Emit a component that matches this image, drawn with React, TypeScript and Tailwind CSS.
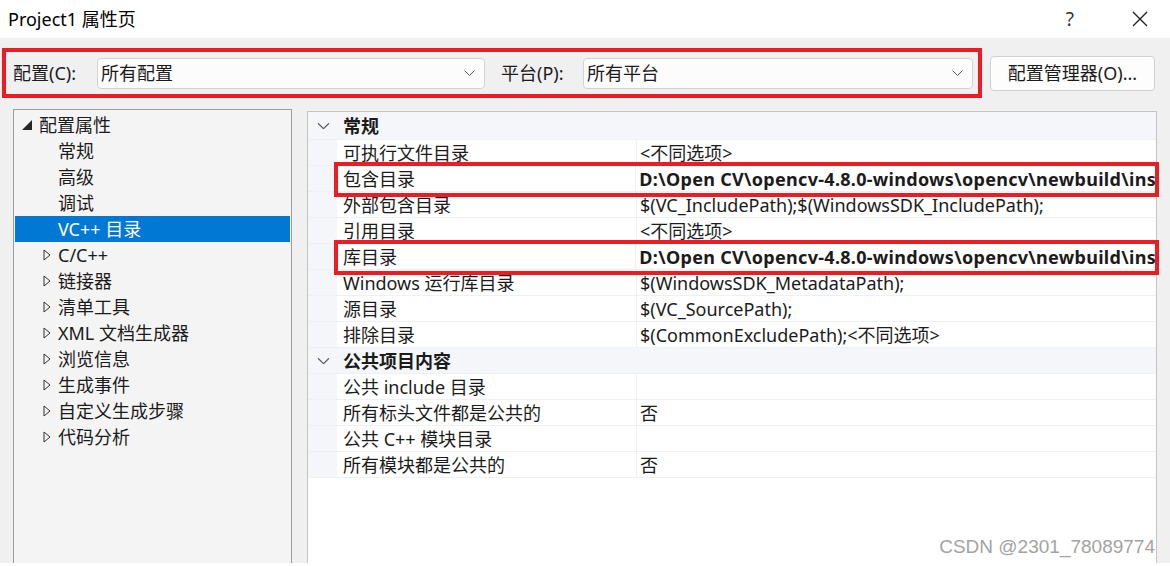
import React from 'react';

type TreeItem = {
  label: string;
  level: 0 | 1;
  arrow?: 'open' | 'closed';
  selected?: boolean;
};

const TREE: TreeItem[] = [
  { label: '配置属性', level: 0, arrow: 'open' },
  { label: '常规', level: 1 },
  { label: '高级', level: 1 },
  { label: '调试', level: 1 },
  { label: 'VC++ 目录', level: 1, selected: true },
  { label: 'C/C++', level: 1, arrow: 'closed' },
  { label: '链接器', level: 1, arrow: 'closed' },
  { label: '清单工具', level: 1, arrow: 'closed' },
  { label: 'XML 文档生成器', level: 1, arrow: 'closed' },
  { label: '浏览信息', level: 1, arrow: 'closed' },
  { label: '生成事件', level: 1, arrow: 'closed' },
  { label: '自定义生成步骤', level: 1, arrow: 'closed' },
  { label: '代码分析', level: 1, arrow: 'closed' },
];

type Prop = { name: string; value: string; bold?: boolean };

// the value column is cut at the panel edge, so only the visible part is kept
const SECTIONS: { title: string; first?: boolean; rows: Prop[] }[] = [
  {
    title: '常规',
    first: true,
    rows: [
      { name: '可执行文件目录', value: '<不同选项>' },
      { name: '包含目录', value: 'D:\\Open CV\\opencv-4.8.0-windows\\opencv\\newbuild\\ins', bold: true },
      { name: '外部包含目录', value: '$(VC_IncludePath);$(WindowsSDK_IncludePath);' },
      { name: '引用目录', value: '<不同选项>' },
      { name: '库目录', value: 'D:\\Open CV\\opencv-4.8.0-windows\\opencv\\newbuild\\ins', bold: true },
      { name: 'Windows 运行库目录', value: '$(WindowsSDK_MetadataPath);' },
      { name: '源目录', value: '$(VC_SourcePath);' },
      { name: '排除目录', value: '$(CommonExcludePath);<不同选项>' },
    ],
  },
  {
    title: '公共项目内容',
    rows: [
      { name: '公共 include 目录', value: '' },
      { name: '所有标头文件都是公共的', value: '否' },
      { name: '公共 C++ 模块目录', value: '' },
      { name: '所有模块都是公共的', value: '否' },
    ],
  },
];

function Chevron({ className = '' }: { className?: string }) {
  return (
    <svg width="11" height="6" viewBox="0 0 11 6" className={className}>
      <polyline points="0.5,0.5 5.5,5.5 10.5,0.5" fill="none" stroke="#5a5a5a" strokeWidth="1" />
    </svg>
  );
}

function Dropdown({ value, width }: { value: string; width: string }) {
  return (
    <div className={`${width} h-[31px] flex items-center justify-between pl-[3px] pr-[9px] bg-[#fcfcfc] border border-[#d3d3d3] rounded-[4px]`}>
      <span>{value}</span>
      <Chevron />
    </div>
  );
}

function TreeRow({ item }: { item: TreeItem }) {
  return (
    <div className={`h-[26px] flex items-center ${item.selected ? 'bg-[#0078d4] text-white' : ''}`}>
      {item.level === 0 ? (
        <div className="w-[24px] flex items-center pl-[7px]">
          <svg width="10" height="10" viewBox="0 0 10 10">
            <path d="M10 0 L10 10 L0 10 Z" fill="#262626" />
          </svg>
        </div>
      ) : (
        <div className="w-[43px] flex items-center pl-[28px]">
          {item.arrow === 'closed' && (
            <svg width="8" height="12" viewBox="0 0 8 12">
              <path d="M1 1 L7 6 L1 11 Z" fill="none" stroke="#333" strokeWidth="1" />
            </svg>
          )}
        </div>
      )}
      <span>{item.label}</span>
    </div>
  );
}

export default function App() {
  return (
    <div className="relative w-[1170px] h-[566px] overflow-hidden bg-white text-[#1b1b1b] text-[18px] leading-none [font-family:'Noto_Sans','Noto_Sans_CJK_SC',sans-serif]">
      {/* title bar */}
      <div className="h-[38px] flex items-center justify-between pl-[8px] pr-[22px]">
        <span className="text-black">Project1 属性页</span>
        <div className="flex items-center gap-[58px]">
          <span className="text-[19px] text-[#333]">?</span>
          <svg width="16" height="16" viewBox="0 0 16 16">
            <path d="M1 1 L15 15 M15 1 L1 15" stroke="#222" strokeWidth="1.4" />
          </svg>
        </div>
      </div>

      <div className="h-[525px] bg-[#f0f0f0] flex flex-col">
        {/* config row */}
        <div className="flex items-center pt-[10px] pl-[2px]">
          <div className="w-[980px] h-[50px] border-4 border-[#ed1c24] flex items-center pl-[7px]">
            <span className="w-[84px]">配置(C):</span>
            <Dropdown value="所有配置" width="w-[388px]" />
            <span className="w-[82px] ml-[16px]">平台(P):</span>
            <Dropdown value="所有平台" width="w-[390px]" />
          </div>
          <button className="ml-[8px] w-[165px] h-[35px] bg-[#fdfdfd] border border-[#d0d0d0] rounded-[4px] text-[18px] text-[#1b1b1b]">
            配置管理器(O)...
          </button>
        </div>

        <div className="flex flex-1 mt-[11px] pl-[13px] gap-[15px]">
          {/* tree */}
          <div className="w-[279px] bg-[#f4f4f4] border border-[#9c9c9c] border-b-0 p-px pt-[2px]">
            {TREE.map((t) => (
              <TreeRow key={t.label} item={t} />
            ))}
          </div>

          {/* property grid */}
          <div className="relative w-[850px] mt-[2px]">
            <div className="h-full bg-white border border-[#c4c4c4] border-b-0 overflow-hidden">
              {SECTIONS.map((s) => (
                <div key={s.title}>
                  <div className={`${s.first ? 'h-[28px]' : 'h-[26px]'} flex items-center bg-[#f4f6fa] border-b border-[#edf0f4]`}>
                    <div className="w-[29px] pl-[10px] flex items-center">
                      <Chevron className="scale-110" />
                    </div>
                    <span className="pl-[6px] font-bold">{s.title}</span>
                  </div>
                  {s.rows.map((r) => (
                    <div key={r.name} className="h-[26px] flex border-b border-[#edf0f4]">
                      <div className="w-[29px] bg-[#f4f6fa]" />
                      <div className="w-[299px] flex items-center pl-[6px] whitespace-nowrap">{r.name}</div>
                      <div className={`flex-1 flex items-center pl-[3px] whitespace-nowrap border-l border-[#edf0f4] ${r.bold ? 'font-bold tracking-[0.3px]' : ''}`}>
                        {r.value}
                      </div>
                    </div>
                  ))}
                </div>
              ))}
            </div>

            {/* highlight annotations */}
            <div className="absolute left-[27px] top-[51px] w-[825px] h-[35px] border-4 border-[#ed1c24] pointer-events-none" />
            <div className="absolute left-[27px] top-[129px] w-[825px] h-[35px] border-4 border-[#ed1c24] pointer-events-none" />
          </div>
        </div>
      </div>

      {/* watermark */}
      <span className="absolute right-[15px] top-[537px] text-[19px] text-[#a3a3a3] [font-family:'Liberation_Sans',Arial,sans-serif]">
        CSDN @2301_78089774
      </span>
    </div>
  );
}
